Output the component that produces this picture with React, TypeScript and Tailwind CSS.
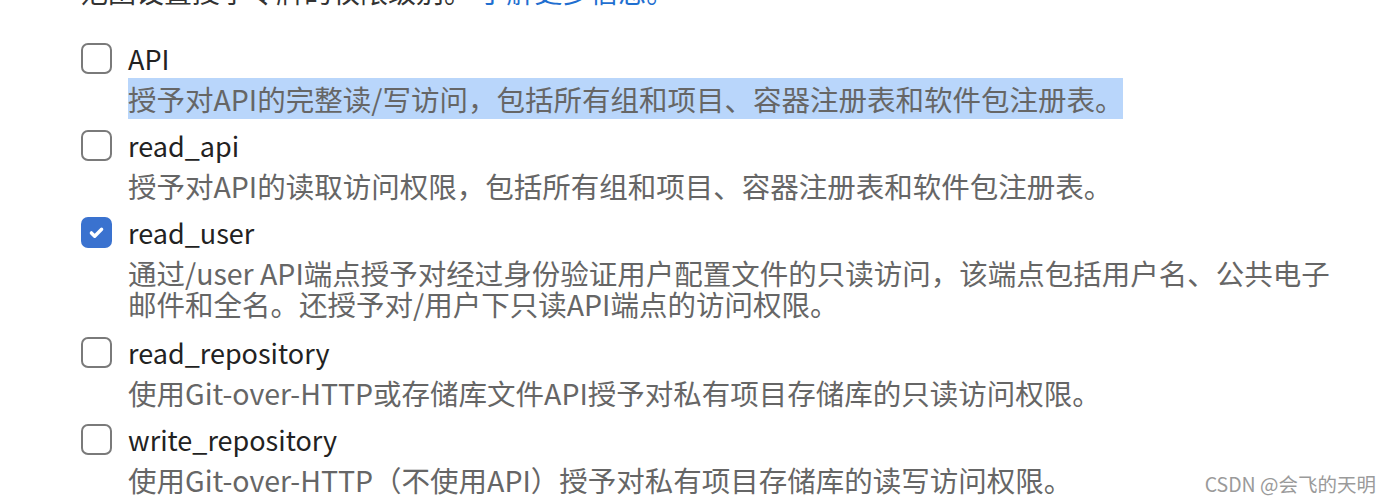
import React, { useState } from 'react';

interface Scope {
  id: string;
  label: string;
  desc: string[];
  highlight?: boolean;
}

const SCOPES: Scope[] = [
  {
    id: 'api',
    label: 'API',
    desc: ['授予对API的完整读/写访问，包括所有组和项目、容器注册表和软件包注册表。'],
    highlight: true,
  },
  {
    id: 'read_api',
    label: 'read_api',
    desc: ['授予对API的读取访问权限，包括所有组和项目、容器注册表和软件包注册表。'],
  },
  {
    id: 'read_user',
    label: 'read_user',
    desc: [
      '通过/user API端点授予对经过身份验证用户配置文件的只读访问，该端点包括用户名、公共电子',
      '邮件和全名。还授予对/用户下只读API端点的访问权限。',
    ],
  },
  {
    id: 'read_repository',
    label: 'read_repository',
    desc: ['使用Git-over-HTTP或存储库文件API授予对私有项目存储库的只读访问权限。'],
  },
  {
    id: 'write_repository',
    label: 'write_repository',
    desc: ['使用Git-over-HTTP（不使用API）授予对私有项目存储库的读写访问权限。'],
  },
];

const FONT = { fontFamily: '"Noto Sans CJK SC", "Noto Sans", sans-serif' };

const Check: React.FC<{ checked: boolean; onToggle: () => void }> = ({ checked, onToggle }) => (
  <button
    type="button"
    onClick={onToggle}
    className={`flex h-[31px] w-[31px] items-center justify-center rounded-[7px] ${
      checked ? 'bg-[#3a72cf]' : 'border-2 border-[#7a7a7a] bg-white'
    }`}
  >
    {checked && (
      <svg viewBox="0 0 16 16" className="h-[17px] w-[17px]" fill="none">
        <path d="M3.2 8.4l3.1 3.1L12.8 5" stroke="#fff" strokeWidth="3.2" strokeLinecap="round" strokeLinejoin="round" />
      </svg>
    )}
  </button>
);

export default function App() {
  const [checked, setChecked] = useState<Record<string, boolean>>({ read_user: true });

  return (
    <div className="relative h-[502px] w-[1390px] overflow-hidden bg-white" style={FONT}>
      <p className="-mt-[24px] pl-[80px] text-[28px] leading-[30px] text-[#333]">
        范围设置授予令牌的权限级别。 <span className="text-[#1f6fd0]">了解更多信息。</span>
      </p>

      <div className="mt-[33px] flex flex-col gap-[12px] pl-[81px]">
        {SCOPES.map((s) => (
          <div key={s.id} className={`flex gap-4 ${s.desc.length > 1 ? 'pb-[2px]' : ''}`}>
            <div className="flex h-[39px] items-center">
              <Check
                checked={!!checked[s.id]}
                onToggle={() => setChecked((c) => ({ ...c, [s.id]: !c[s.id] }))}
              />
            </div>
            <div>
              <div className="text-[27px] leading-[39px] text-[#222]">{s.label}</div>
              <div className="mt-[5px] text-[28.5px] leading-[31px] text-[#666]">
                {s.desc.map((line) => (
                  <div key={line}>
                    <span className={s.highlight ? 'bg-[#b9d6fb]' : ''}>{line}</span>
                  </div>
                ))}
              </div>
            </div>
          </div>
        ))}
      </div>

      <div className="absolute bottom-[6px] right-[14px] text-[19.5px] leading-[24px] text-[#9a9a9a]">
        CSDN @会飞的天明
      </div>
    </div>
  );
}
